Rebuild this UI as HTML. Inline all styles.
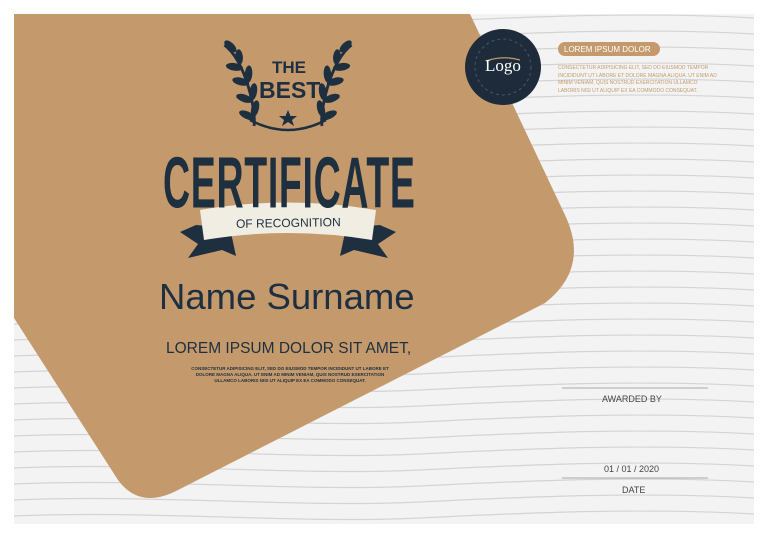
<!DOCTYPE html>
<html><head><meta charset="utf-8"><style>
body{margin:0;width:768px;height:539px;background:#fff;overflow:hidden;position:relative;font-family:"Liberation Sans",sans-serif}
.t{position:absolute;white-space:nowrap}
</style></head><body>
<svg width="768" height="539" style="position:absolute;left:0;top:0">
<defs>
<clipPath id="c"><rect x="14" y="14" width="740" height="510"/></clipPath>
<path id="w" d="M14,0 C150,-6 300,8 420,2 S650,-8 754,-2" fill="none" stroke="#d4d4d4" stroke-width="1.2"/>
<g id="lf">
<path d="M0,0 C4,-14 -1,-68 -22,-88" fill="none" stroke="#1e2f40" stroke-width="3"/>
<ellipse cx="-6" cy="-12" rx="4" ry="9" transform="rotate(-60 -6 -12)" fill="#1e2f40"/>
<ellipse cx="3" cy="-18" rx="4" ry="9" transform="rotate(20 3 -18)" fill="#1e2f40"/>
<ellipse cx="-7" cy="-30" rx="4" ry="9" transform="rotate(-65 -7 -30)" fill="#1e2f40"/>
<ellipse cx="3" cy="-36" rx="4" ry="9" transform="rotate(15 3 -36)" fill="#1e2f40"/>
<ellipse cx="-9" cy="-48" rx="4" ry="9" transform="rotate(-70 -9 -48)" fill="#1e2f40"/>
<ellipse cx="0" cy="-55" rx="4" ry="9" transform="rotate(10 0 -55)" fill="#1e2f40"/>
<ellipse cx="-14" cy="-64" rx="4" ry="9" transform="rotate(-75 -14 -64)" fill="#1e2f40"/>
<ellipse cx="-8" cy="-74" rx="4" ry="8" transform="rotate(0 -8 -74)" fill="#1e2f40"/>
<ellipse cx="-16" cy="-86" rx="4" ry="8" transform="rotate(-40 -16 -86)" fill="#1e2f40"/>
</g>
</defs>
<rect x="14" y="14" width="740" height="510" fill="#f3f3f3"/>
<g clip-path="url(#c)">
<use href="#w" y="20"/><use href="#w" y="36"/><use href="#w" y="52"/><use href="#w" y="68"/><use href="#w" y="84"/><use href="#w" y="100"/><use href="#w" y="116"/><use href="#w" y="132"/><use href="#w" y="148"/><use href="#w" y="164"/><use href="#w" y="180"/><use href="#w" y="196"/><use href="#w" y="212"/><use href="#w" y="228"/><use href="#w" y="244"/><use href="#w" y="260"/><use href="#w" y="276"/><use href="#w" y="292"/><use href="#w" y="308"/><use href="#w" y="324"/><use href="#w" y="340"/><use href="#w" y="356"/><use href="#w" y="372"/><use href="#w" y="388"/><use href="#w" y="404"/><use href="#w" y="420"/><use href="#w" y="436"/><use href="#w" y="452"/><use href="#w" y="468"/><use href="#w" y="484"/><use href="#w" y="500"/><use href="#w" y="516"/>
</g>
<path d="M14,14 L470,14 L565,215 Q590,268 545,303 L178,490 Q140,510 118,480 L14,318 Z" fill="#c49a6c"/>
<g transform="translate(254,126) rotate(-6) scale(0.95)"><use href="#lf"/></g>
<g transform="translate(322,126) scale(-1,1) rotate(-6) scale(0.95)"><use href="#lf"/></g>
<path d="M250,120 Q288,140 326,120" fill="none" stroke="#1e2f40" stroke-width="2.5"/>
<polygon points="288,110 290.5,116 297,116 292,120 294,126 288,122 282,126 284,120 279,116 285.5,116" fill="#1e2f40"/>
<polygon points="196,225 230,228 236,256 222,250 188,258 198,244 180,232" fill="#1e2f40"/>
<polygon points="380,225 346,228 340,256 354,250 388,258 378,244 396,232" fill="#1e2f40"/>
<path d="M200,210 Q288,195 376,210 L372,240 Q288,226 204,240 Z" fill="#f0ede3"/>
<circle cx="503" cy="67" r="38" fill="#1d2b3a"/>
<circle cx="503" cy="67" r="28" fill="none" stroke="#4a5766" stroke-width="1" stroke-dasharray="3 3"/>
<path d="M486,61 Q503,55 520,60" fill="none" stroke="#c49a6c" stroke-width="1.2"/>
<rect x="558" y="42" width="102" height="14" rx="7" fill="#c49a6c"/>
<line x1="562" y1="388" x2="708" y2="388" stroke="#aaa" stroke-width="1"/>
<line x1="562" y1="478" x2="708" y2="478" stroke="#aaa" stroke-width="1"/>
</svg>
<div class="t" style="left:272px;top:58px;font:bold 17px 'Liberation Sans';color:#1e2f40">THE</div>
<div class="t" style="left:259px;top:77px;font:bold 23px 'Liberation Sans';color:#1e2f40">BEST</div>
<div class="t" style="left:163px;top:140px;font:bold 56px 'Liberation Sans',sans-serif;color:#1e2f40;transform:scale(0.67,1.3);transform-origin:top left;letter-spacing:1px">CERTIFICATE</div>
<div class="t" style="left:236px;top:216px;font:12px 'Liberation Sans';color:#1e2f40;transform:rotate(-1deg)">OF RECOGNITION</div>
<div class="t" style="left:159px;top:276px;font:36.5px 'Liberation Sans';color:#1e2f40">Name Surname</div>
<div class="t" style="left:166px;top:340px;font:15.5px 'Liberation Sans',sans-serif;color:#1e2f40">LOREM IPSUM DOLOR SIT AMET,</div>
<div class="t" style="left:190px;top:366px;width:200px;text-align:center;font:bold 4.5px/6px 'Liberation Sans';color:#1e2f40;white-space:normal">CONSECTETUR ADIPISICING ELIT, SED DO EIUSMOD TEMPOR INCIDIDUNT UT LABORE ET DOLORE MAGNA ALIQUA. UT ENIM AD MINIM VENIAM, QUIS NOSTRUD EXERCITATION ULLAMCO LABORIS NISI UT ALIQUIP EX EA COMMODO CONSEQUAT.</div>
<div class="t" style="left:485px;top:56px;font:17px 'Liberation Serif';color:#fff">Logo</div>
<div class="t" style="left:564px;top:45px;font:8px 'Liberation Sans';color:#fff">LOREM IPSUM DOLOR</div>
<div class="t" style="left:558px;top:65px;width:160px;font:5px/7.5px 'Liberation Sans';color:#c49a6c;white-space:normal">CONSECTETUR ADIPISICING ELIT, SED DO EIUSMOD TEMPOR INCIDIDUNT UT LABORE ET DOLORE MAGNA ALIQUA. UT ENIM AD MINIM VENIAM, QUIS NOSTRUD EXERCITATION ULLAMCO LABORIS NISI UT ALIQUIP EX EA COMMODO CONSEQUAT.</div>
<div class="t" style="left:602px;top:394px;font:9px 'Liberation Sans';color:#444">AWARDED BY</div>
<div class="t" style="left:604px;top:464px;font:9px 'Liberation Sans';color:#444">01 / 01 / 2020</div>
<div class="t" style="left:622px;top:485px;font:9px 'Liberation Sans';color:#444">DATE</div>
</body></html>
